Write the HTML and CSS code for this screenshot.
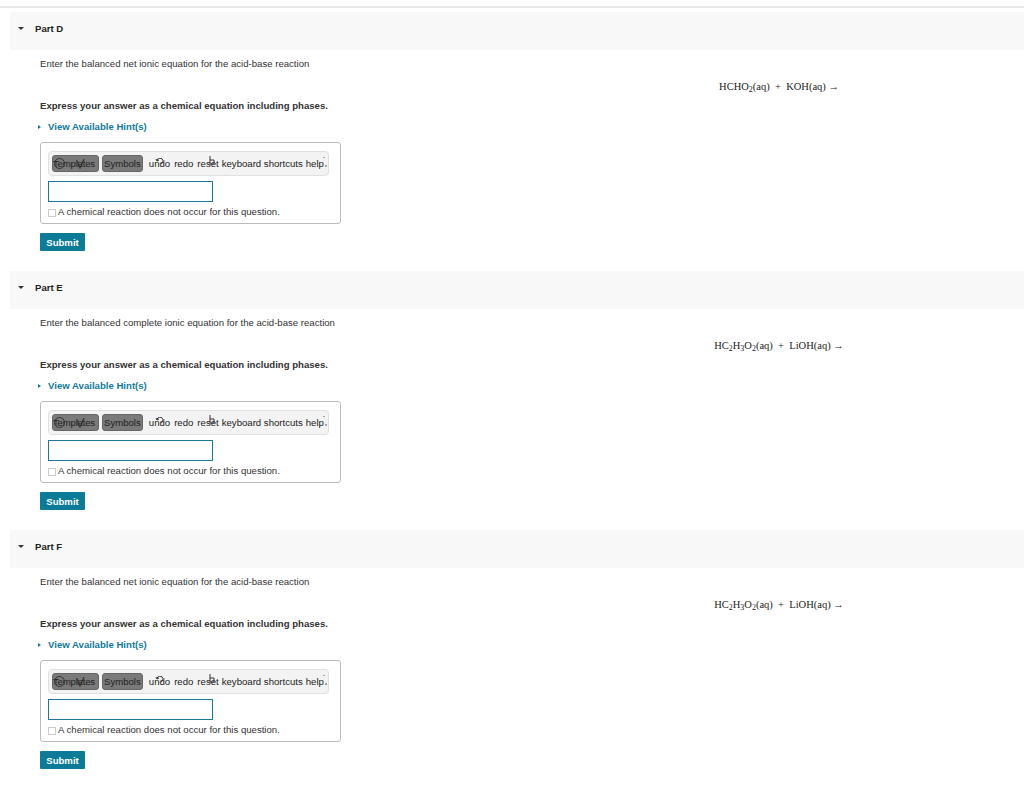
FILE: index.html
```html
<!DOCTYPE html>
<html lang="en">
<head>
    <meta charset="UTF-8">
    <title>Parts D-F</title>
    <link rel="stylesheet" href="styles.css">
</head>
<body>
    <div class="top-rule"></div>

    <section class="part">
        <div class="part-header"><span class="caret"></span>Part D</div>
        <div class="part-body">
            <p class="prompt">Enter the balanced net ionic equation for the acid-base reaction</p>
            <div class="equation-row"><span class="equation">HCHO<sub>2</sub>(aq) &nbsp;+&nbsp; KOH(aq) &rarr;</span></div>
            <p class="instruction">Express your answer as a chemical equation including phases.</p>
            <a class="hint"><span class="hint-caret"></span>View Available Hint(s)</a>
            <div class="answer-box">
                <div class="toolbar">
                    <span class="tool-btn templates"><span class="ico-circle"></span>Templates<svg class="ico-sqrt" viewBox="0 0 8 10"><path d="M0 2 L3 9 L7 0" fill="none" stroke="#333" stroke-width="1.2"/></svg></span>
                    <span class="tool-btn">Symbols</span>
                    <span class="tool-link">u<svg class="ico-undo" viewBox="0 0 8 8"><path d="M6 6 A3 3 0 1 0 2 3 M1 1 L2 3 L4 2" fill="none" stroke="#333" stroke-width="1"/></svg>ndo</span>
                    <span class="tool-link redo">redo</span>
                    <span class="tool-link">res<svg class="ico-reset" viewBox="0 0 6 10"><path d="M1 0 V8 M1 4 H5 V8 H1" fill="none" stroke="#333" stroke-width="1"/></svg>et</span>
                    <span class="tool-link">keyboard shortcuts</span>
                    <span class="tool-link">help<svg class="ico-help" viewBox="0 0 4 12"><path d="M1 1 V2 M3 9 V11" fill="none" stroke="#555" stroke-width="1"/></svg></span>
                </div>
                <div class="answer-input"></div>
                <label class="no-reaction"><span class="check"></span>A chemical reaction does not occur for this question.</label>
            </div>
            <button class="submit">Submit</button>
        </div>
    </section>

    <section class="part">
        <div class="part-header"><span class="caret"></span>Part E</div>
        <div class="part-body">
            <p class="prompt">Enter the balanced complete ionic equation for the acid-base reaction</p>
            <div class="equation-row"><span class="equation">HC<sub>2</sub>H<sub>3</sub>O<sub>2</sub>(aq) &nbsp;+&nbsp; LiOH(aq) &rarr;</span></div>
            <p class="instruction">Express your answer as a chemical equation including phases.</p>
            <a class="hint"><span class="hint-caret"></span>View Available Hint(s)</a>
            <div class="answer-box">
                <div class="toolbar">
                    <span class="tool-btn templates"><span class="ico-circle"></span>Templates<svg class="ico-sqrt" viewBox="0 0 8 10"><path d="M0 2 L3 9 L7 0" fill="none" stroke="#333" stroke-width="1.2"/></svg></span>
                    <span class="tool-btn">Symbols</span>
                    <span class="tool-link">u<svg class="ico-undo" viewBox="0 0 8 8"><path d="M6 6 A3 3 0 1 0 2 3 M1 1 L2 3 L4 2" fill="none" stroke="#333" stroke-width="1"/></svg>ndo</span>
                    <span class="tool-link redo">redo</span>
                    <span class="tool-link">res<svg class="ico-reset" viewBox="0 0 6 10"><path d="M1 0 V8 M1 4 H5 V8 H1" fill="none" stroke="#333" stroke-width="1"/></svg>et</span>
                    <span class="tool-link">keyboard shortcuts</span>
                    <span class="tool-link">help<svg class="ico-help" viewBox="0 0 4 12"><path d="M1 1 V2 M3 9 V11" fill="none" stroke="#555" stroke-width="1"/></svg></span>
                </div>
                <div class="answer-input"></div>
                <label class="no-reaction"><span class="check"></span>A chemical reaction does not occur for this question.</label>
            </div>
            <button class="submit">Submit</button>
        </div>
    </section>

    <section class="part">
        <div class="part-header"><span class="caret"></span>Part F</div>
        <div class="part-body">
            <p class="prompt">Enter the balanced net ionic equation for the acid-base reaction</p>
            <div class="equation-row"><span class="equation">HC<sub>2</sub>H<sub>3</sub>O<sub>2</sub>(aq) &nbsp;+&nbsp; LiOH(aq) &rarr;</span></div>
            <p class="instruction">Express your answer as a chemical equation including phases.</p>
            <a class="hint"><span class="hint-caret"></span>View Available Hint(s)</a>
            <div class="answer-box">
                <div class="toolbar">
                    <span class="tool-btn templates"><span class="ico-circle"></span>Templates<svg class="ico-sqrt" viewBox="0 0 8 10"><path d="M0 2 L3 9 L7 0" fill="none" stroke="#333" stroke-width="1.2"/></svg></span>
                    <span class="tool-btn">Symbols</span>
                    <span class="tool-link">u<svg class="ico-undo" viewBox="0 0 8 8"><path d="M6 6 A3 3 0 1 0 2 3 M1 1 L2 3 L4 2" fill="none" stroke="#333" stroke-width="1"/></svg>ndo</span>
                    <span class="tool-link redo">redo</span>
                    <span class="tool-link">res<svg class="ico-reset" viewBox="0 0 6 10"><path d="M1 0 V8 M1 4 H5 V8 H1" fill="none" stroke="#333" stroke-width="1"/></svg>et</span>
                    <span class="tool-link">keyboard shortcuts</span>
                    <span class="tool-link">help<svg class="ico-help" viewBox="0 0 4 12"><path d="M1 1 V2 M3 9 V11" fill="none" stroke="#555" stroke-width="1"/></svg></span>
                </div>
                <div class="answer-input"></div>
                <label class="no-reaction"><span class="check"></span>A chemical reaction does not occur for this question.</label>
            </div>
            <button class="submit">Submit</button>
        </div>
    </section>
</body>
</html>
```

FILE: styles.css
```css
body {
    margin: 0;
    background: #fff;
    font-family: "Liberation Sans", Arial, sans-serif;
    font-size: 9.6px;
    color: #333;
}
.top-rule {
    height: 2px;
    margin-top: 6px;
    background: #e8e8e8;
}
.part {
    padding-top: 4px;
    padding-bottom: 16px;
}
.part-header {
    margin-left: 10px;
    height: 38px;
    background: #f8f8f8;
    display: flex;
    align-items: center;
    padding-left: 8px;
    padding-bottom: 6px;
    box-sizing: border-box;
    font-weight: bold;
    color: #222;
}
.caret {
    width: 0;
    height: 0;
    border-left: 3px solid transparent;
    border-right: 3px solid transparent;
    border-top: 3px solid #333;
    margin: 0 11px 0 0;
}
.part-body {
    padding-left: 40px;
    display: flex;
    flex-direction: column;
    align-items: flex-start;
}
.prompt {
    margin: 8px 0 0;
    line-height: 11px;
}
.equation-row {
    align-self: stretch;
    display: flex;
    justify-content: flex-end;
    margin-top: 12px;
}
.equation {
    width: 490px;
    text-align: center;
    font-family: "Liberation Serif", "Times New Roman", serif;
    font-size: 10.5px;
    line-height: 11px;
    color: #222;
}
.equation sub {
    font-size: 8px;
    vertical-align: -2px;
    line-height: 0;
}
.instruction {
    margin: 8px 0 0;
    font-weight: bold;
    line-height: 11px;
    color: #333;
}
.hint {
    margin-top: 10px;
    font-weight: bold;
    color: #137a9a;
    line-height: 11px;
    display: flex;
    align-items: center;
}
.hint-caret {
    width: 0;
    height: 0;
    border-top: 2px solid transparent;
    border-bottom: 2px solid transparent;
    border-left: 3px solid #137a9a;
    margin: 0 7px 0 -2px;
}
.answer-box {
    margin-top: 10px;
    width: 301px;
    box-sizing: border-box;
    border: 1px solid #bbb;
    border-radius: 3px;
    padding: 8px 11px 6px 7px;
}
.toolbar {
    height: 25px;
    box-sizing: border-box;
    background: #f3f3f3;
    border: 1px solid #e0e0e0;
    border-radius: 4px;
    display: flex;
    align-items: center;
    padding-left: 3px;
    gap: 3px;
    color: #222;
}
.tool-btn {
    position: relative;
    background: #7a7a7a;
    border: 1px solid #666;
    border-radius: 3px;
    height: 17px;
    line-height: 16px;
    box-sizing: border-box;
    padding: 0 1px;
    color: #1e1e1e;
    white-space: nowrap;
}
.templates {
    width: 47px;
    padding: 0;
    letter-spacing: -0.2px;
}
.tool-link {
    position: relative;
    white-space: nowrap;
}
.tool-btn + .tool-link {
    margin-left: 3px;
}
.redo {
    border-left: 1px dashed transparent;
    border-right: 1px dashed transparent;
}
.ico-circle {
    position: absolute;
    left: 1px;
    top: 2px;
    width: 9px;
    height: 9px;
    border: 1.5px solid #333;
    border-radius: 50%;
}
.ico-sqrt {
    position: absolute;
    left: 24px;
    top: 3px;
    width: 8px;
    height: 10px;
}
.ico-undo {
    position: absolute;
    left: 6px;
    top: 0;
    width: 8px;
    height: 8px;
}
.ico-reset {
    position: absolute;
    left: 12px;
    top: -2px;
    width: 6px;
    height: 10px;
}
.ico-help {
    position: absolute;
    right: -3px;
    top: -2px;
    width: 4px;
    height: 12px;
}
.answer-input {
    margin-top: 5px;
    width: 165px;
    height: 21px;
    box-sizing: border-box;
    border: 1px solid #1a7a96;
}
.no-reaction {
    display: flex;
    align-items: center;
    margin-top: 4px;
    line-height: 11px;
}
.check {
    width: 6px;
    height: 6px;
    border: 1px solid #ccc;
    margin: 2px 2px 0 0;
}
.submit {
    margin-top: 9px;
    width: 45px;
    height: 18px;
    border: none;
    border-radius: 1px;
    background: #0c7b98;
    color: #fff;
    font-family: "Liberation Sans", Arial, sans-serif;
    font-size: 9.6px;
    font-weight: bold;
    padding: 0;
}
```
